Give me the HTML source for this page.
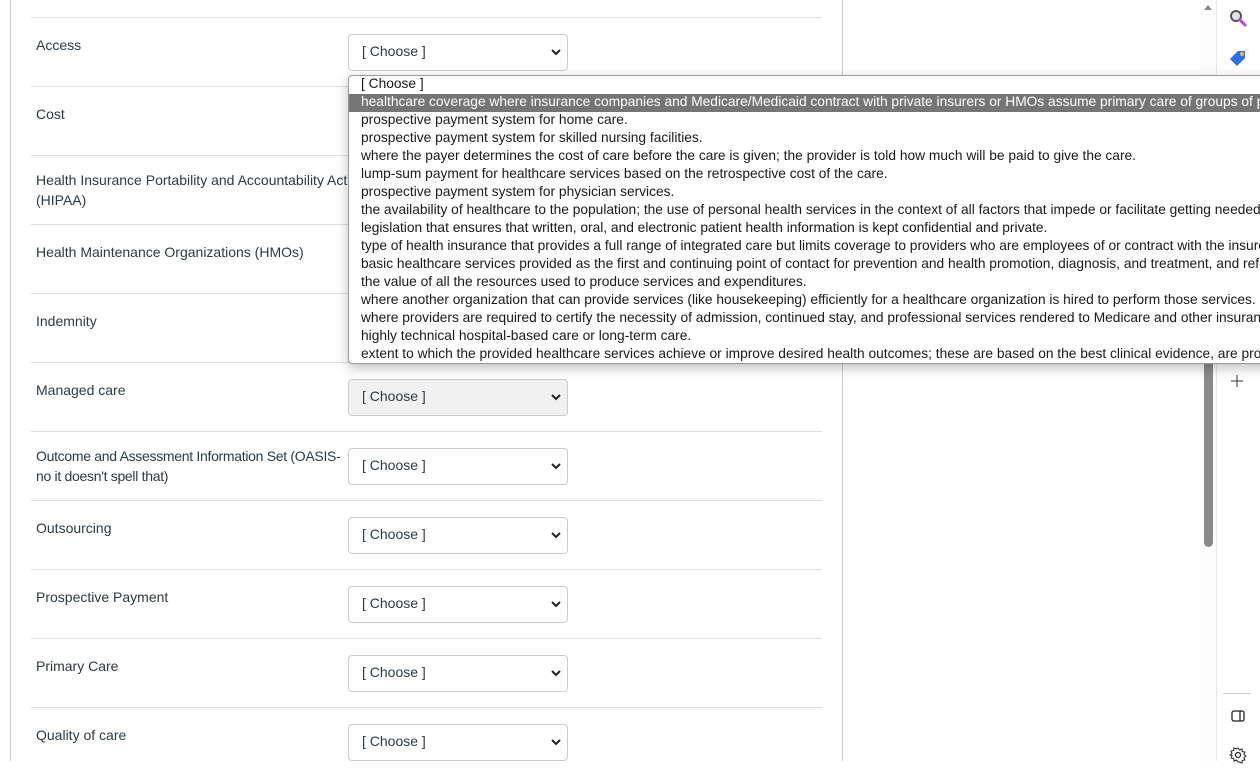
<!DOCTYPE html>
<html><head><meta charset="utf-8"><style>
*{margin:0;padding:0;box-sizing:border-box}
html,body{width:1260px;height:761px;overflow:hidden;background:#fff;font-family:"Liberation Sans",sans-serif;color:#2d3b45}
.lb{position:absolute;left:10px;top:0;width:1px;height:761px;background:#c7cdd1}
.rb{position:absolute;left:842px;top:0;width:1px;height:761px;background:#c7cdd1}
.row{position:absolute;left:31px;width:791px;height:69px;border-top:1px solid #dcdfe2}
.lab{position:absolute;left:5px;top:17px;font-size:14px;line-height:20px;width:330px;white-space:nowrap}
.sel{position:absolute;left:317px;top:16px;width:220px;height:37px;border:1px solid #c7cdd1;border-radius:4px;background:#fff;font-size:14px;padding:8px 13px;color:#2d3b45}
.sel svg{position:absolute;right:6px;top:14px}
.track{position:absolute;left:1200px;top:0;width:16px;height:761px;background:#fcfcfc}
.sep{position:absolute;left:1216px;top:0;width:1px;height:761px;background:#e8e8e8}
.thumb{position:absolute;left:1204px;top:340px;width:9px;height:207px;background:#8a8a8a;border-radius:5px}
.dd{position:absolute;left:348px;top:75px;width:930px;height:289px;background:#fff;border:1px solid #9a9a9a;border-radius:4px;box-shadow:0 4px 12px rgba(0,0,0,.25);overflow:hidden;font-size:13.75px;line-height:18px;white-space:nowrap;color:#1a1a1a;padding-top:0}
.dd div{padding-left:12px;height:18px;line-height:15px}
.dd .hi{background:#757575;color:#fff}
</style></head><body>
<div class="lb"></div><div class="rb"></div>
<div class="row" style="top:17px"><div class="lab">Access</div><div class="sel">[ Choose ]<svg width="10" height="7" viewBox="0 0 10 7"><path d="M1 1l4 4 4-4" fill="none" stroke="#222" stroke-width="2"/></svg></div></div>
<div class="row" style="top:86px"><div class="lab">Cost</div></div>
<div class="row" style="top:155px"><div class="lab" style="top:14px">Health Insurance Portability and Accountability Act<br>(HIPAA)</div></div>
<div class="row" style="top:224px"><div class="lab">Health Maintenance Organizations (HMOs)</div></div>
<div class="row" style="top:293px"><div class="lab">Indemnity</div></div>
<div class="row" style="top:362px"><div class="lab">Managed care</div><div class="sel" style="background:#f1f1f1">[ Choose ]<svg width="10" height="7" viewBox="0 0 10 7"><path d="M1 1l4 4 4-4" fill="none" stroke="#222" stroke-width="2"/></svg></div></div>
<div class="row" style="top:431px"><div class="lab" style="top:14px;letter-spacing:-0.3px">Outcome and Assessment Information Set (OASIS-<br>no it doesn't spell that)</div><div class="sel">[ Choose ]<svg width="10" height="7" viewBox="0 0 10 7"><path d="M1 1l4 4 4-4" fill="none" stroke="#222" stroke-width="2"/></svg></div></div>
<div class="row" style="top:500px"><div class="lab">Outsourcing</div><div class="sel">[ Choose ]<svg width="10" height="7" viewBox="0 0 10 7"><path d="M1 1l4 4 4-4" fill="none" stroke="#222" stroke-width="2"/></svg></div></div>
<div class="row" style="top:569px"><div class="lab">Prospective Payment</div><div class="sel">[ Choose ]<svg width="10" height="7" viewBox="0 0 10 7"><path d="M1 1l4 4 4-4" fill="none" stroke="#222" stroke-width="2"/></svg></div></div>
<div class="row" style="top:638px"><div class="lab">Primary Care</div><div class="sel">[ Choose ]<svg width="10" height="7" viewBox="0 0 10 7"><path d="M1 1l4 4 4-4" fill="none" stroke="#222" stroke-width="2"/></svg></div></div>
<div class="row" style="top:707px"><div class="lab">Quality of care</div><div class="sel">[ Choose ]<svg width="10" height="7" viewBox="0 0 10 7"><path d="M1 1l4 4 4-4" fill="none" stroke="#222" stroke-width="2"/></svg></div></div>
<div class="track"></div><div class="sep"></div><div class="thumb"></div>
<svg style="position:absolute;left:1203px;top:3px" width="10" height="8"><path d="M1 7L5 2 9 7Z" fill="#888"/></svg>
<svg style="position:absolute;left:1228px;top:8px" width="20" height="20"><circle cx="8" cy="8" r="5" fill="#dde6ee" stroke="#555" stroke-width="2"/><path d="M12 12l5 5" stroke="#c040e0" stroke-width="3" stroke-linecap="round"/></svg>
<svg style="position:absolute;left:1228px;top:48px" width="20" height="20"><path d="M2 11L10 3h7v7l-8 8z" fill="#2e6ee8"/><circle cx="14" cy="6" r="2" fill="#f0c020"/></svg>
<svg style="position:absolute;left:1230px;top:374px" width="14" height="14"><path d="M7 1v12M1 7h12" stroke="#333" stroke-width="1"/></svg>
<div style="position:absolute;left:1223px;top:693px;width:28px;height:1px;background:#ccc"></div>
<svg style="position:absolute;left:1231px;top:710px" width="14" height="12"><rect x="1" y="1" width="12" height="10" rx="2" fill="none" stroke="#222" stroke-width="1.3"/><path d="M9 1v10" stroke="#222" stroke-width="1.3"/></svg>
<svg style="position:absolute;left:1229px;top:746px" width="18" height="18"><circle cx="9" cy="9" r="2.5" fill="none" stroke="#222" stroke-width="1.2"/><path d="M9 2l1.5 2 2.5-1 .3 2.6 2.6.4-1 2.5 2 1.5-2 1.5 1 2.5-2.6.4-.3 2.6-2.5-1L9 16l-1.5-2-2.5 1-.3-2.6L2.1 12l1-2.5L1 9l2-1.5-1-2.5 2.6-.4.3-2.6 2.5 1z" fill="none" stroke="#222" stroke-width="1"/></svg>
<div class="dd">
<div>[ Choose ]</div>
<div class="hi">healthcare coverage where insurance companies and Medicare/Medicaid contract with private insurers or HMOs assume primary care of groups of people.</div>
<div>prospective payment system for home care.</div>
<div>prospective payment system for skilled nursing facilities.</div>
<div>where the payer determines the cost of care before the care is given; the provider is told how much will be paid to give the care.</div>
<div>lump-sum payment for healthcare services based on the retrospective cost of the care.</div>
<div>prospective payment system for physician services.</div>
<div>the availability of healthcare to the population; the use of personal health services in the context of all factors that impede or facilitate getting needed care.</div>
<div>legislation that ensures that written, oral, and electronic patient health information is kept confidential and private.</div>
<div>type of health insurance that provides a full range of integrated care but limits coverage to providers who are employees of or contract with the insurer.</div>
<div>basic healthcare services provided as the first and continuing point of contact for prevention and health promotion, diagnosis, and treatment, and referral.</div>
<div>the value of all the resources used to produce services and expenditures.</div>
<div>where another organization that can provide services (like housekeeping) efficiently for a healthcare organization is hired to perform those services.</div>
<div>where providers are required to certify the necessity of admission, continued stay, and professional services rendered to Medicare and other insurance.</div>
<div>highly technical hospital-based care or long-term care.</div>
<div>extent to which the provided healthcare services achieve or improve desired health outcomes; these are based on the best clinical evidence, are provided.</div>
</div>
</body></html>
